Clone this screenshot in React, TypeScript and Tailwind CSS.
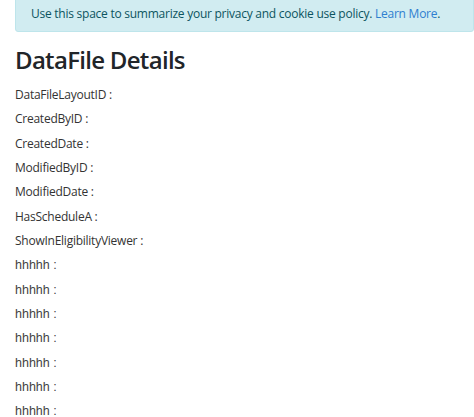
export default function App() {
  const labels = [
    "DataFileLayoutID :",
    "CreatedByID :",
    "CreatedDate :",
    "ModifiedByID :",
    "ModifiedDate :",
    "HasScheduleA :",
    "ShowInEligibilityViewer :",
  ];
  const h = Array.from({ length: 7 }, () => "hhhhh :");
  return (
    <div className="w-[474px] h-[417px] overflow-hidden bg-white" style={{ fontFamily: '"Open Sans", "Noto Sans", sans-serif' }}>
      <div className="ml-[15px] -mt-[10px] h-[42px] rounded-br-[3px] rounded-bl-[3px] border border-[#bee5eb] bg-[#d1ecf1] pl-[15px] pt-[14px] text-[12px] leading-[18px] text-[#0c5460] tracking-[-0.25px] whitespace-nowrap">
        Use this space to summarize your privacy and cookie use policy. <span className="text-[#2e7fd0]">Learn More</span>.
      </div>
      <h1 className="ml-[15px] mt-[12px] text-[24px] leading-[32px] font-semibold text-[#212529] tracking-[-0.7px]">DataFile Details</h1>
      <div className="ml-[15px] mt-[7px]">
        {labels.map((l, i) => (
          <div key={i} className="h-[24.35px] leading-[24.35px] text-[12px] text-[#333] tracking-[-0.25px]">{l}</div>
        ))}
        {h.map((l, i) => (
          <div key={"h" + i} className="h-[24.35px] leading-[24.35px] text-[12.5px] text-[#444]" style={{ fontFamily: '"Liberation Sans", Arial, sans-serif' }}>{l}</div>
        ))}
      </div>
    </div>
  );
}
